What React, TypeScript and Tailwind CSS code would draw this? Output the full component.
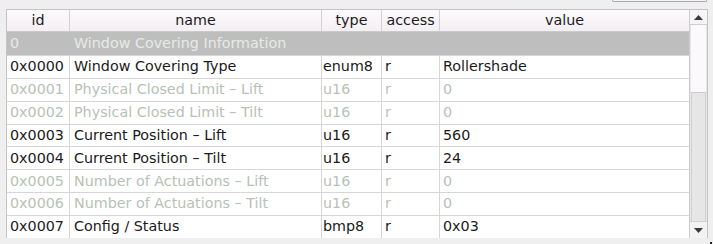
import React from "react";

type Row = { id: string; name: string; type: string; access: string; value: string; dim?: boolean };

const rows: Row[] = [
  { id: "0x0000", name: "Window Covering Type", type: "enum8", access: "r", value: "Rollershade" },
  { id: "0x0001", name: "Physical Closed Limit \u2013 Lift", type: "u16", access: "r", value: "0", dim: true },
  { id: "0x0002", name: "Physical Closed Limit \u2013 Tilt", type: "u16", access: "r", value: "0", dim: true },
  { id: "0x0003", name: "Current Position \u2013 Lift", type: "u16", access: "r", value: "560" },
  { id: "0x0004", name: "Current Position \u2013 Tilt", type: "u16", access: "r", value: "24" },
  { id: "0x0005", name: "Number of Actuations \u2013 Lift", type: "u16", access: "r", value: "0", dim: true },
  { id: "0x0006", name: "Number of Actuations \u2013 Tilt", type: "u16", access: "r", value: "0", dim: true },
  { id: "0x0007", name: "Config / Status", type: "bmp8", access: "r", value: "0x03" },
];

const cols = ["w-[63px]", "w-[252px]", "w-[60px]", "w-[58px]", "w-[249px]"];

function Arrow({ up }: { up?: boolean }) {
  return (
    <svg width="9" height="5" viewBox="0 0 9 5">
      {up ? <path d="M0 5 L4.5 0 L9 5 Z" fill="#3a3a3a" /> : <path d="M0 0 L4.5 5 L9 0 Z" fill="#3a3a3a" />}
    </svg>
  );
}

export default function App() {
  const font = { fontFamily: '"DejaVu Sans", Verdana, sans-serif' };
  return (
    <div className="relative w-[713px] h-[244px] bg-[#efefef] overflow-hidden text-[14.3px]" style={font}>
      {/* edge of the button above the table */}
      <div className="h-[9px] flex justify-end pr-[6px]">
        <div className="w-[95px] h-[2px] border-x border-b border-[#a9a9a9] rounded-b-[2px] bg-[#f4f4f4]" />
      </div>
      <div className="ml-[6px] w-[702px] h-[229px] border border-[#c4c4c4] border-b-0 flex bg-white">
        <div className="w-[682px] flex flex-col">
          {/* header */}
          <div className="flex h-[22px] border-b border-[#cacaca] bg-gradient-to-b from-[#fdfafd] to-[#f3eff3] text-[#1c1c1c]">
            {["id", "name", "type", "access", "value"].map((h, i) => (
              <div
                key={h}
                className={`${cols[i]} shrink-0 flex items-center justify-center leading-none ${i < 4 ? "border-r border-[#d2d2d2]" : ""}`}
              >
                {h}
              </div>
            ))}
          </div>
          {/* section row */}
          <div className="flex h-[23px] bg-[#bebebe] text-[#e6ebe6]">
            <div className={`${cols[0]} shrink-0 flex items-center pl-[3px]`}>0</div>
            <div className="flex items-center pl-[4px]">Window Covering Information</div>
          </div>
          {rows.map((r) => (
            <div
              key={r.id}
              className={`flex h-[23px] border-t border-[#d6d6d6] ${r.dim ? "text-[#b6c2b6]" : "text-[#1a1a1a]"}`}
            >
              <div className={`${cols[0]} shrink-0 flex items-center pl-[3px] border-r border-[#d6d6d6]`}>{r.id}</div>
              <div className={`${cols[1]} shrink-0 flex items-center pl-[4px] border-r border-[#d6d6d6] whitespace-nowrap`}>{r.name}</div>
              <div className={`${cols[2]} shrink-0 flex items-center pl-[1px] border-r border-[#d6d6d6]`}>{r.type}</div>
              <div className={`${cols[3]} shrink-0 flex items-center pl-[3px] border-r border-[#d6d6d6]`}>{r.access}</div>
              <div className={`${cols[4]} shrink-0 flex items-center pl-[3px]`}>{r.value}</div>
            </div>
          ))}
        </div>
        {/* vertical scrollbar */}
        <div className="w-[18px] flex flex-col border-l border-[#cdcdcd] bg-[#e6e6e6]">
          <div className="h-[15px] flex items-center justify-center bg-[#f7f5f7] border-b border-[#cfcfcf]">
            <Arrow up />
          </div>
          <div className="h-[68px] mx-[1px] bg-[#fcf9fc] border-b border-[#cdcdcd]" />
          <div className="flex-1 mx-[1px] border-x border-[#d2d2d2]" />
          <div className="h-[17px] flex items-center justify-center bg-[#f3f3f3] border-t border-[#cfcfcf]">
            <Arrow />
          </div>
        </div>
      </div>
      <div className="absolute left-[710px] top-[242px] w-[2px] h-[2px] bg-[#222]" />
    </div>
  );
}
